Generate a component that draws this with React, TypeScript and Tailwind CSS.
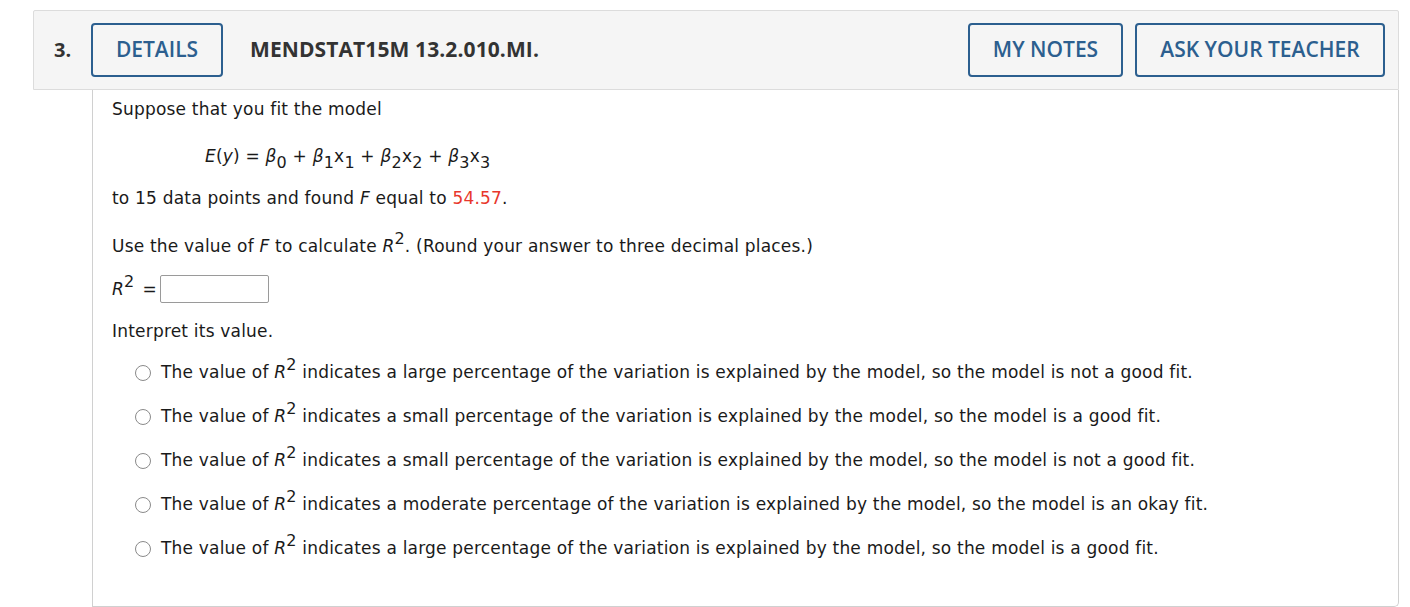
const options = [
  'indicates a large percentage of the variation is explained by the model, so the model is not a good fit.',
  'indicates a small percentage of the variation is explained by the model, so the model is a good fit.',
  'indicates a small percentage of the variation is explained by the model, so the model is not a good fit.',
  'indicates a moderate percentage of the variation is explained by the model, so the model is an okay fit.',
  'indicates a large percentage of the variation is explained by the model, so the model is a good fit.',
]

function R2() {
  return (
    <span>
      <i>R</i>
      <sup className="text-[16px] top-[-0.5em]">2</sup>
    </span>
  )
}

function Sub({ n }: { n: number }) {
  return <sub className="text-[16px] bottom-[-0.4em]">{n}</sub>
}

function Beta({ n }: { n: number }) {
  return (
    <span>
      <i>β</i>
      <Sub n={n} />
    </span>
  )
}

export default function App() {
  return (
    <div className="bg-white w-[1410px] h-[607px] pt-[10px] pl-[33px] font-['DejaVu_Sans',sans-serif] text-[17px] tracking-[0.2px] text-[#222]">
      <div className="w-[1366px] h-[80px] bg-[#f5f5f5] border border-[#dcdcdc] rounded-t-[2px] flex items-center pl-[20px] pr-[13px] font-['Open_Sans',sans-serif] tracking-normal">
        <span className="text-[20px] font-bold text-[#333] w-[37px]">3.</span>
        <button className="h-[54px] w-[132px] border-2 border-[#2c5f8f] rounded-[4px] text-[#2c5f8f] text-[21px] font-semibold">DETAILS</button>
        <span className="ml-[27px] text-[21px] font-bold text-[#333] tracking-[0.1px]">MENDSTAT15M 13.2.010.MI.</span>
        <div className="ml-auto flex gap-[12px]">
          <button className="h-[54px] w-[155px] border-2 border-[#2c5f8f] rounded-[4px] text-[#2c5f8f] text-[21px] font-semibold">MY NOTES</button>
          <button className="h-[54px] w-[250px] border-2 border-[#2c5f8f] rounded-[4px] text-[#2c5f8f] text-[21px] font-semibold">ASK YOUR TEACHER</button>
        </div>
      </div>
      <div className="ml-[59px] w-[1307px] h-[517px] border-l border-r border-b border-[#d0d0d0] rounded-br-[5px] pl-[19px] pt-[8px] leading-[22px] text-[#1a1a1a]">
        <p>Suppose that you fit the model</p>
        <p className="mt-[25px] pl-[93px]">
          <i>E</i>(<i>y</i>) = <Beta n={0} /> + <Beta n={1} />x<Sub n={1} /> + <Beta n={2} />x<Sub n={2} /> + <Beta n={3} />x<Sub n={3} />
        </p>
        <p className="mt-[20px]">
          to 15 data points and found <i>F</i> equal to <span className="text-[#e8372c]">54.57</span>.
        </p>
        <p className="mt-[26px]">
          Use the value of <i>F</i> to calculate <R2 />. (Round your answer to three decimal places.)
        </p>
        <div className="mt-[17px] flex items-center h-[30px]">
          <R2 />
          <span className="ml-[8px]">=</span>
          <input className="ml-[3px] w-[109px] h-[28px] border border-[#9a9a9a] rounded-[2px] bg-white" />
        </div>
        <p className="mt-[16px]">Interpret its value.</p>
        <div className="mt-[19px] pl-[23px] flex flex-col gap-[22px]">
          {options.map((o, i) => (
            <label key={i} className="flex items-center h-[22px]">
              <span className="w-[16px] h-[16px] rounded-full border border-[#8a8a8a] bg-white mr-[10px] mt-[1px]" />
              <span>
                The value of <R2 /> {o}
              </span>
            </label>
          ))}
        </div>
      </div>
    </div>
  )
}
